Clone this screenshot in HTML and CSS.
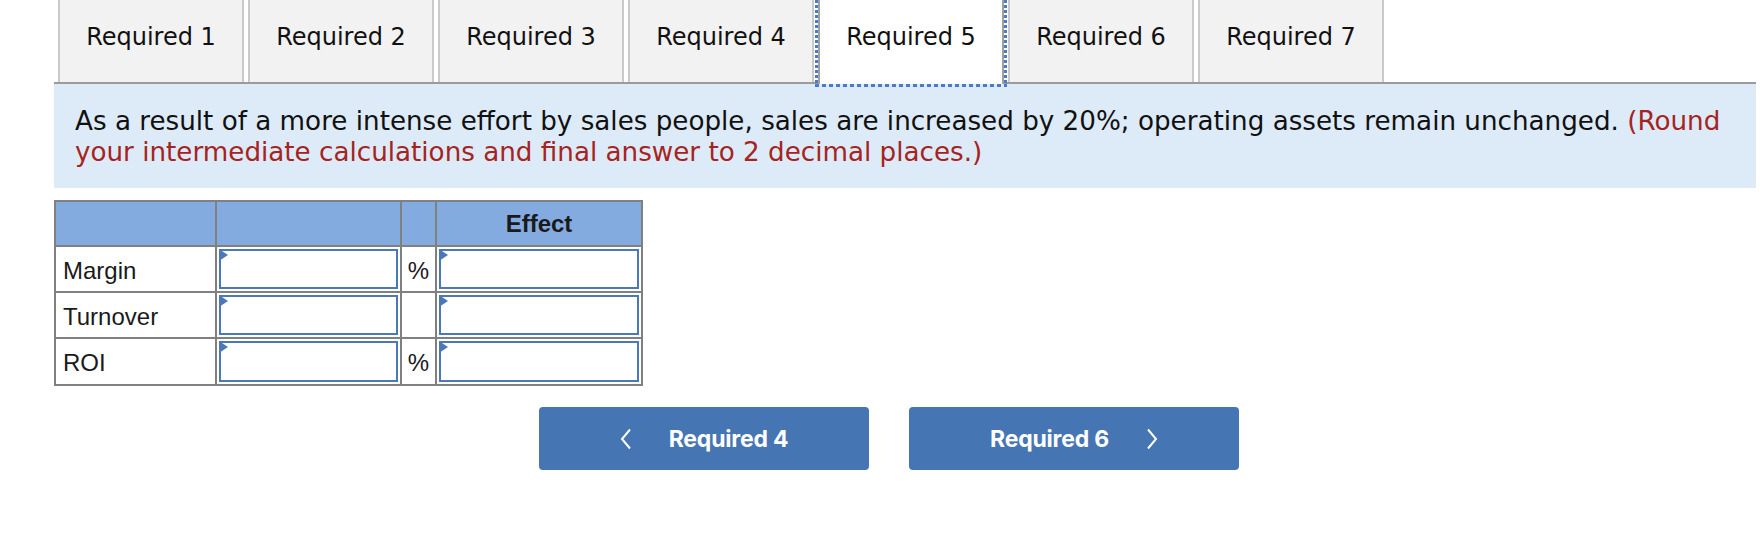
FILE: index.html
```html
<!DOCTYPE html>
<html lang="en">
<head>
<meta charset="utf-8">
<title>Required 5</title>
<link rel="stylesheet" href="styles.css">
</head>
<body>
<div class="page">
  <ul class="tabs">
    <li class="tab">Required 1</li>
    <li class="tab">Required 2</li>
    <li class="tab">Required 3</li>
    <li class="tab">Required 4</li>
    <li class="tab active">Required 5</li>
    <li class="tab">Required 6</li>
    <li class="tab">Required 7</li>
  </ul>
  <div class="prompt">As a result of a more intense effort by sales people, sales are increased by 20%; operating assets remain unchanged. <span class="note">(Round your intermediate calculations and final answer to 2 decimal places.)</span></div>

  <table class="grid">
    <colgroup>
      <col class="c-label"><col class="c-value"><col class="c-unit"><col class="c-effect">
    </colgroup>
    <thead>
      <tr class="head"><th></th><th></th><th></th><th>Effect</th></tr>
    </thead>
    <tbody>
      <tr>
        <td class="label">Margin</td>
        <td class="in"><div class="box"></div></td>
        <td class="unit">%</td>
        <td class="in"><div class="box"></div></td>
      </tr>
      <tr>
        <td class="label">Turnover</td>
        <td class="in"><div class="box"></div></td>
        <td class="unit"></td>
        <td class="in"><div class="box"></div></td>
      </tr>
      <tr class="last">
        <td class="label">ROI</td>
        <td class="in"><div class="box"></div></td>
        <td class="unit">%</td>
        <td class="in"><div class="box"></div></td>
      </tr>
    </tbody>
  </table>

  <div class="nav">
    <button class="btn prev"><svg class="chev" width="12" height="22" viewBox="0 0 12 22"><polyline points="10,1.5 2,11 10,20.5" fill="none" stroke="#fff" stroke-width="2"/></svg><span>Required 4</span></button>
    <button class="btn next"><span>Required 6</span><svg class="chev" width="12" height="22" viewBox="0 0 12 22"><polyline points="2,1.5 10,11 2,20.5" fill="none" stroke="#fff" stroke-width="2"/></svg></button>
  </div>
</div>
</body>
</html>
```
FILE: styles.css
```css
html, body {
  margin: 0;
  padding: 0;
  background: #fff;
}

.page {
  padding-left: 54px;
  width: 1702px;
}

.tabs {
  list-style: none;
  margin: 0;
  padding: 0 0 0 4px;
  display: flex;
  gap: 4px;
  height: 82px;
  border-bottom: 2px solid #9b9b9b;
}

.tab {
  position: relative;
  box-sizing: border-box;
  width: 186px;
  border-left: 2px solid #cacaca;
  border-right: 2px solid #cacaca;
  background: #f2f2f2;
  display: flex;
  align-items: center;
  justify-content: center;
  padding-bottom: 8px;
  font-family: "DejaVu Sans", Verdana, sans-serif;
  font-size: 24px;
  color: #111;
}

.tab.active {
  background: #fff;
  border-color: #a0a0a0;
  margin-bottom: -2px;
  padding-bottom: 10px;
  z-index: 1;
}

.tab.active::after {
  content: "";
  position: absolute;
  left: -5px;
  right: -5px;
  top: 0;
  bottom: -3px;
  background:
    repeating-linear-gradient(to bottom, #4a7bc4 0 3px, transparent 3px 5px) left top / 3px 100% no-repeat,
    repeating-linear-gradient(to bottom, #4a7bc4 0 3px, transparent 3px 5px) right top / 3px 100% no-repeat,
    repeating-linear-gradient(to right, #4a7bc4 0 4px, transparent 4px 7px) left bottom / 100% 3px no-repeat;
}

.prompt {
  background: #ddebf8;
  padding: 22px 21px 20px;
  height: 62px;
  font-family: "DejaVu Sans", Verdana, sans-serif;
  font-size: 26.2px;
  line-height: 31px;
  color: #111;
}

.note {
  color: #a52421;
}

.grid {
  margin-top: 12px;
  border-collapse: separate;
  border-spacing: 2px;
  background: #808080;
  table-layout: fixed;
  width: 589px;
  font-family: "Liberation Sans", Arial, sans-serif;
  font-size: 24px;
  color: #1a1a1a;
}

.c-label { width: 159px; }
.c-value { width: 183px; }
.c-unit { width: 33px; }
.c-effect { width: 204px; }

.grid th,
.grid td {
  padding: 0;
  background: #fff;
  vertical-align: middle;
}

.grid th {
  background: #84abe0;
  height: 43px;
  font-weight: bold;
  text-align: center;
  color: #1a1a1a;
}

.grid td.label {
  padding: 3px 0 0 7px;
  height: 41px;
}

.grid td.unit {
  text-align: center;
  padding: 3px 0 0 0;
  height: 41px;
}

.grid .last td.label,
.grid .last td.unit {
  height: 42px;
}

.grid td.in {
  padding: 2px;
  height: 40px;
}

.grid .last td.in {
  height: 41px;
}

.box {
  position: relative;
  box-sizing: border-box;
  height: 40px;
  border: 2px solid #4a78b8;
  background: #fff;
}

.last .box {
  height: 41px;
}

.box::before {
  content: "";
  position: absolute;
  left: -2px;
  top: -2px;
  border-top: 6.5px solid transparent;
  border-bottom: 6.5px solid transparent;
  border-left: 9px solid #4a78b8;
}

.nav {
  margin-top: 21px;
  padding-left: 485px;
  display: flex;
  gap: 40px;
}

.btn {
  width: 330px;
  height: 63px;
  border: none;
  border-radius: 4px;
  background: #4675b4;
  color: #fff;
  display: flex;
  align-items: center;
  justify-content: center;
  gap: 37px;
  font-family: Inter, Roboto, sans-serif;
  font-weight: 700;
  font-size: 23px;
  letter-spacing: -0.2px;
  padding: 0;
}

.chev {
  display: block;
}
```
